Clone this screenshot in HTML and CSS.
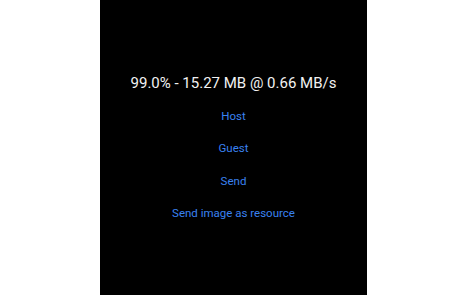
FILE: index.html
```html
<html>
  <head>
    <title>Transfer</title>
    <link rel="stylesheet" href="styles.css">
  </head>
  <body>
    <div class="screen">
      <div class="progress">99.0% - 15.27 MB @ 0.66 MB/s</div>
      <div class="actions">
        <button class="link">Host</button>
        <button class="link">Guest</button>
        <button class="link">Send</button>
        <button class="link">Send image as resource</button>
      </div>
    </div>
  </body>
</html>
```
FILE: styles.css
```css
* {
  box-sizing: border-box;
}
html {
  background-color: #ffffff;
}
body {
  margin: 0;
  font-family: Roboto, "Liberation Sans", sans-serif;
}
.screen {
  margin-left: 100px;
  width: 267px;
  height: 295px;
  background-color: #000000;
  display: flex;
  flex-direction: column;
  align-items: center;
  padding-top: 73px;
}
.progress {
  color: #f2f2f2;
  font-size: 15px;
  line-height: 20px;
}
.actions {
  margin-top: 15px;
  display: flex;
  flex-direction: column;
  align-items: center;
  gap: 16.3px;
}
.link {
  background: none;
  border: none;
  padding: 0;
  color: #3a82f0;
  font-family: Roboto, "Liberation Sans", sans-serif;
  font-size: 11.5px;
  line-height: 16px;
  cursor: pointer;
}
```
